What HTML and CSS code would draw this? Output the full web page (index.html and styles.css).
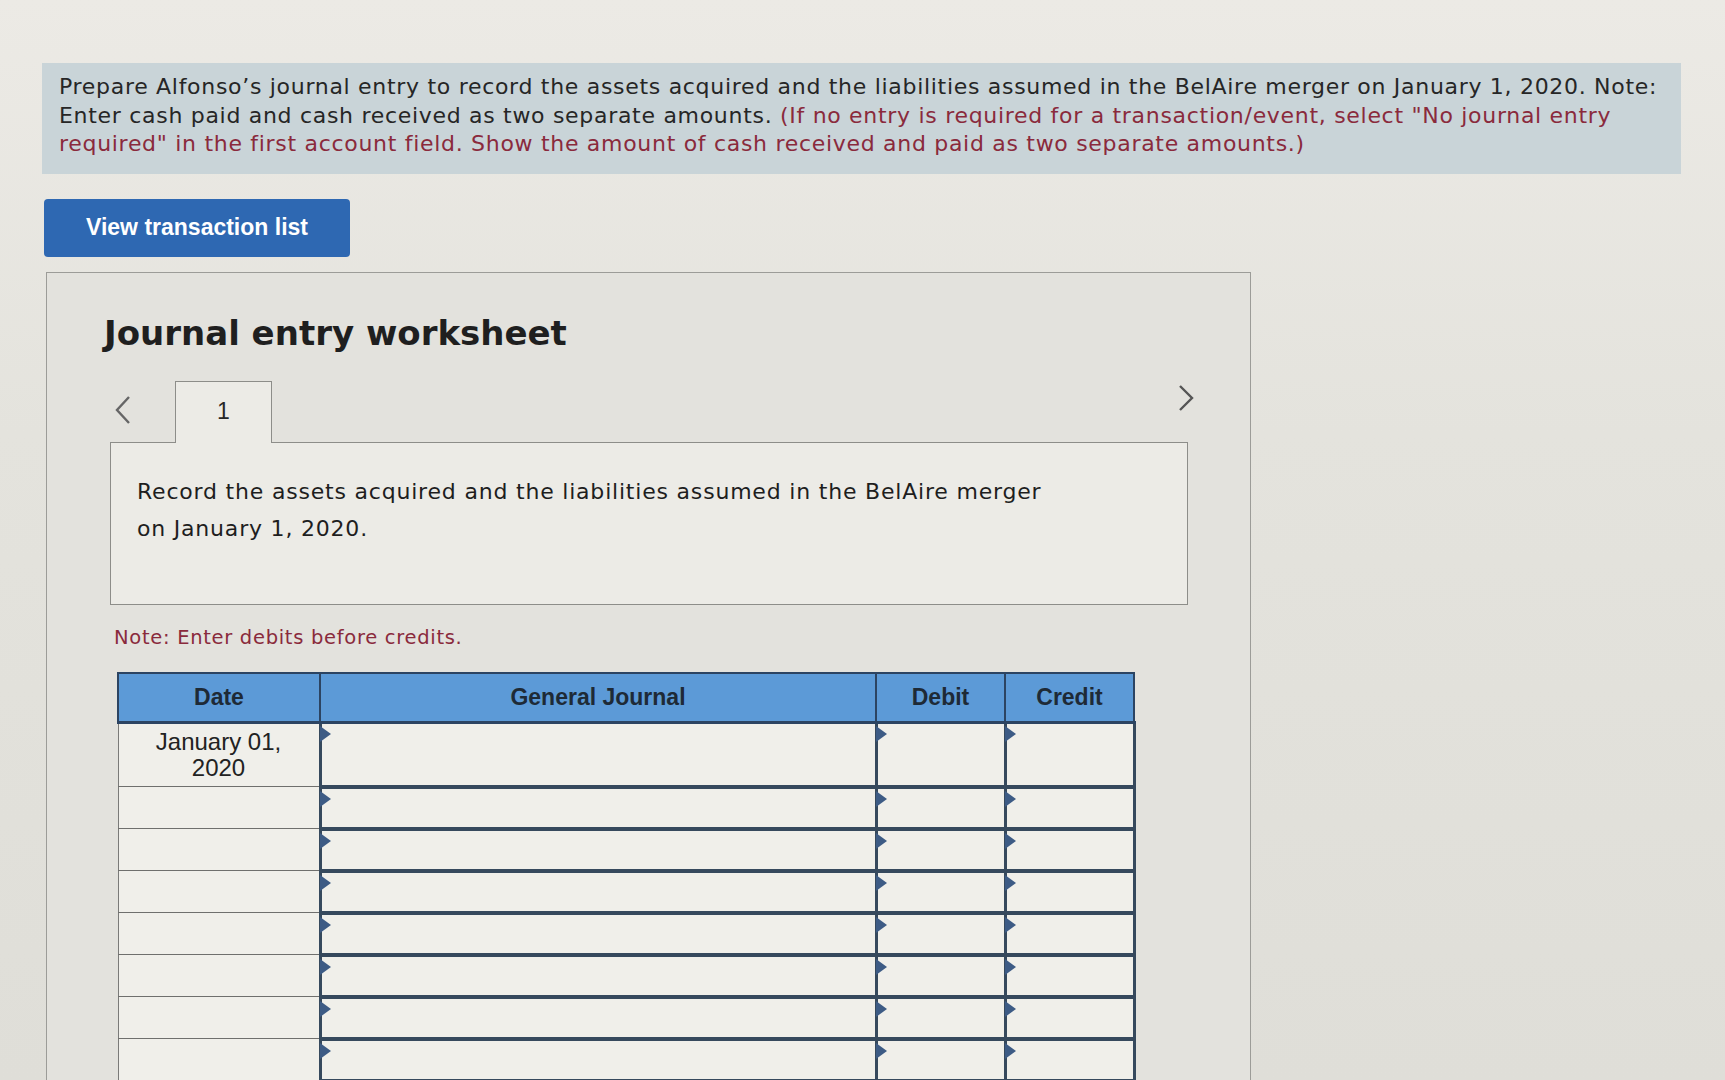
FILE: index.html
```html
<!DOCTYPE html>
<html lang="en">
  <head>
    <meta charset="UTF-8" />
    <meta name="viewport" content="width=device-width, initial-scale=1.0" />
    <title>Journal entry worksheet</title>
    <link rel="stylesheet" href="styles.css">
  </head>
  <body>
    <div class="page">
      <div class="instructions">
        Prepare Alfonso’s journal entry to record the assets acquired and the liabilities assumed in the BelAire merger on January 1, 2020. Note:<br>
        Enter cash paid and cash received as two separate amounts. <span class="hint">(If no entry is required for a transaction/event, select "No journal entry<br>
        required" in the first account field. Show the amount of cash received and paid as two separate amounts.)</span>
      </div>

      <button class="btn-list">View transaction list</button>

      <div class="worksheet">
        <h2>Journal entry worksheet</h2>

        <div class="tabs">
          <span class="arrow prev">
            <svg width="20" height="30" viewBox="0 0 20 30"><path d="M16 2 L4 15 L16 28" fill="none" stroke="#666" stroke-width="2.4"/></svg>
          </span>
          <div class="tab">1</div>
          <span class="arrow next">
            <svg width="18" height="28" viewBox="0 0 18 28"><path d="M3 2 L15 14 L3 26" fill="none" stroke="#555" stroke-width="2.4"/></svg>
          </span>
        </div>

        <div class="task">
          Record the assets acquired and the liabilities assumed in the BelAire merger<br>
          on January 1, 2020.
        </div>

        <p class="note">Note: Enter debits before credits.</p>

        <table class="journal">
          <thead>
            <tr>
              <th class="col-date">Date</th>
              <th class="col-gj">General Journal</th>
              <th class="col-num">Debit</th>
              <th class="col-num">Credit</th>
            </tr>
          </thead>
          <tbody>
            <tr class="first">
              <td class="date">January 01,<br>2020</td>
              <td class="entry"></td>
              <td class="entry"></td>
              <td class="entry"></td>
            </tr>
            <tr><td class="date"></td><td class="entry"></td><td class="entry"></td><td class="entry"></td></tr>
            <tr><td class="date"></td><td class="entry"></td><td class="entry"></td><td class="entry"></td></tr>
            <tr><td class="date"></td><td class="entry"></td><td class="entry"></td><td class="entry"></td></tr>
            <tr><td class="date"></td><td class="entry"></td><td class="entry"></td><td class="entry"></td></tr>
            <tr><td class="date"></td><td class="entry"></td><td class="entry"></td><td class="entry"></td></tr>
            <tr><td class="date"></td><td class="entry"></td><td class="entry"></td><td class="entry"></td></tr>
            <tr><td class="date"></td><td class="entry"></td><td class="entry"></td><td class="entry"></td></tr>
            <tr><td class="date"></td><td class="entry"></td><td class="entry"></td><td class="entry"></td></tr>
          </tbody>
        </table>
      </div>
    </div>
  </body>
</html>
```

FILE: styles.css
```css
* {
  box-sizing: border-box;
}
html,
body {
  height: 100%;
  overflow: hidden;
}
body {
  margin: 0;
  background: linear-gradient(180deg, #eceae5 0%, #e4e3dd 40%, #dfded8 100%);
  font-family: "DejaVu Sans", Verdana, sans-serif;
  color: #262626;
}
.page {
  padding: 63px 44px 0 42px;
}

/* question text */
.instructions {
  width: 1639px;
  background: #c9d4d8;
  padding: 10px 16px 15px 17px;
  font-size: 22px;
  letter-spacing: 0.7px;
  line-height: 28.5px;
}
.hint {
  color: #8a2a3c;
}

.btn-list {
  display: block;
  margin: 25px 0 0 2px;
  width: 306px;
  height: 58px;
  border: none;
  border-radius: 4px;
  background: #2e68b2;
  color: #fff;
  font-family: "Liberation Sans", Arial, sans-serif;
  font-size: 23px;
  font-weight: bold;
}

/* worksheet panel */
.worksheet {
  margin: 15px 0 0 4px;
  width: 1205px;
  height: 900px;
  border: 1px solid #9c9c98;
  background: #e3e2dd;
  padding: 39px 0 0 57px;
}
.worksheet h2 {
  margin: 0;
  font-size: 34px;
  line-height: 42px;
  font-weight: bold;
  color: #1f1f1f;
}

.tabs {
  display: flex;
  align-items: flex-start;
  margin: 27px 0 0 9px;
  width: 1082px;
  height: 62px;
}
.arrow {
  display: block;
  line-height: 0;
}
.arrow.prev {
  margin-top: 14px;
  width: 62px;
}
.arrow.next {
  margin-left: auto;
  margin-top: 3px;
}
.tab {
  width: 97px;
  height: 62px;
  background: #ecebe6;
  border: 1px solid #8d8d89;
  border-bottom: none;
  text-align: center;
  font-family: "Liberation Sans", Arial, sans-serif;
  font-size: 23px;
  padding-top: 16px;
  position: relative;
  z-index: 1;
}

.task {
  margin: -1px 0 0 6px;
  width: 1078px;
  height: 163px;
  border: 1px solid #8d8d89;
  background: #ecebe6;
  padding: 30px 26px;
  font-size: 22px;
  letter-spacing: 0.8px;
  line-height: 37.5px;
  color: #1e1e1e;
}

.note {
  margin: 21px 0 0 10px;
  font-size: 19.5px;
  letter-spacing: 0.7px;
  line-height: 24px;
  color: #8a2a3c;
}

/* journal table */
.journal {
  margin: 22px 0 0 13px;
  border-collapse: collapse;
  table-layout: fixed;
  width: 1016px;
  font-family: "Liberation Sans", Arial, sans-serif;
}
.journal th {
  height: 50px;
  background: #5c9ad7;
  color: #1e2a36;
  font-size: 23px;
  font-weight: bold;
  border: 2px solid #2c4462;
  border-bottom-width: 3px;
}
.col-date {
  width: 202px;
}
.col-gj {
  width: 556px;
}
.col-num {
  width: 129px;
}
.journal td {
  height: 42px;
  background: #f0efea;
  padding: 0;
}
.journal tr.first td {
  height: 64px;
}
.journal td.date {
  border-left: 1px solid #7a7a78;
  border-bottom: 1px solid #6f6f6d;
  text-align: center;
  font-size: 24px;
  line-height: 26px;
  color: #222;
}
.journal td.entry {
  position: relative;
  border-left: 3px solid #36495d;
  border-right: 3px solid #36495d;
  border-bottom: 4px solid #36495d;
}
/* small dropdown marker at the corner of each field */
.journal td.entry::before {
  content: "";
  position: absolute;
  left: -2px;
  top: 2px;
  border-top: 8px solid transparent;
  border-bottom: 8px solid transparent;
  border-left: 11px solid #3d5b85;
}
```
